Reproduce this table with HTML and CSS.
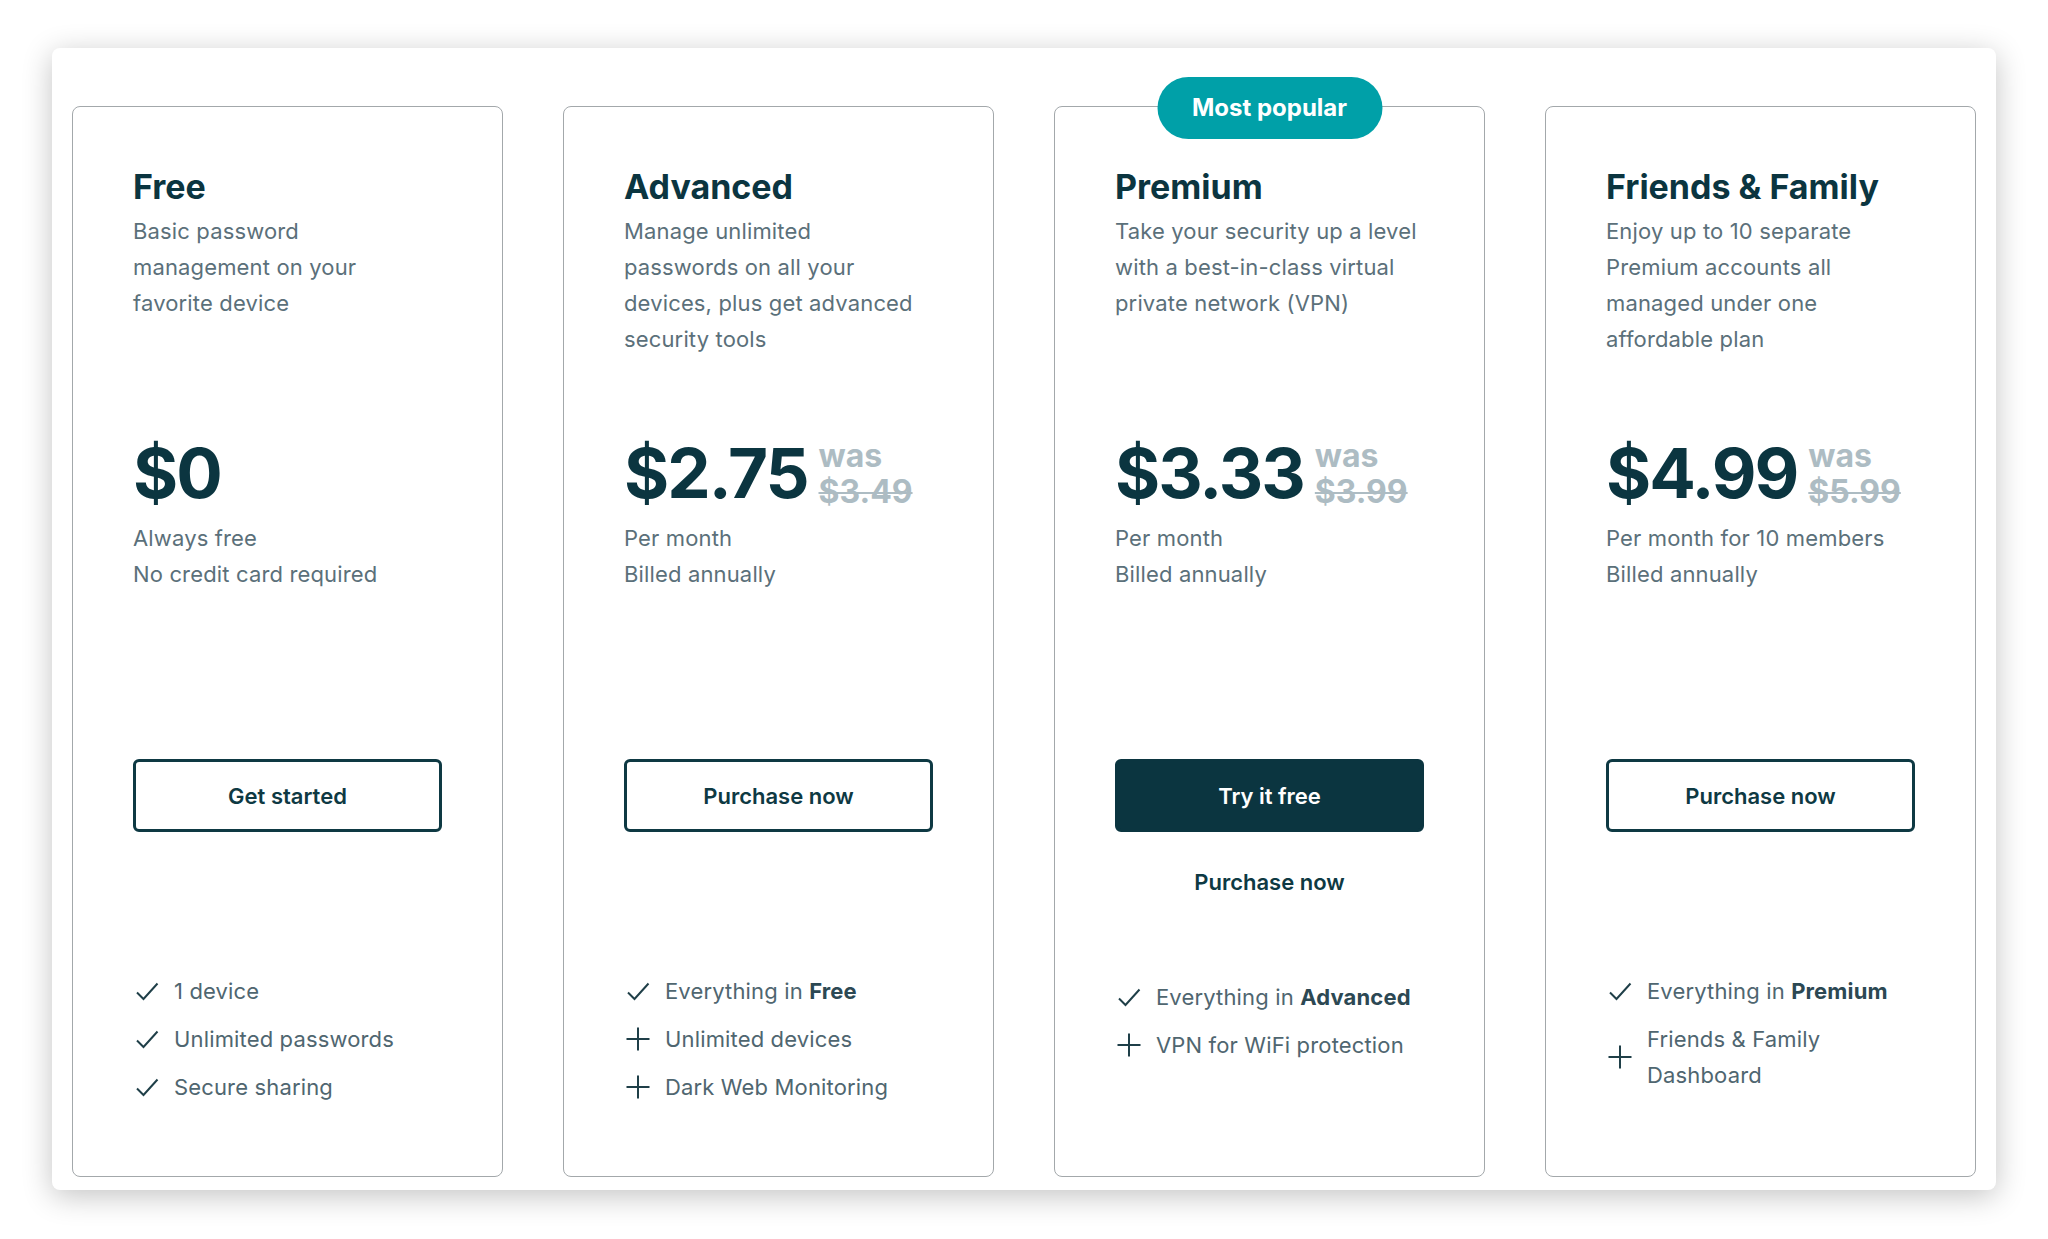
FILE: index.html
```html
<!DOCTYPE html>
<html lang="en">
<head>
<meta charset="utf-8">
<title>Plans</title>
<link rel="stylesheet" href="styles.css">
</head>
<body>
<div class="page">
  <section class="panel">
    <article class="card">
      <h2 class="title">Free</h2>
      <p class="desc">Basic password<br>management on your<br>favorite device</p>
      <div class="price-row"><span class="price">$0</span></div>
      <p class="sub">Always free<br>No credit card required</p>
      <div class="cta"><a class="btn">Get started</a></div>
      <ul class="features">
        <li><svg class="ic" viewBox="0 0 24 24"><path d="M2 13.5 8.5 20 22.5 4.5"/></svg><span>1 device</span></li>
        <li><svg class="ic" viewBox="0 0 24 24"><path d="M2 13.5 8.5 20 22.5 4.5"/></svg><span>Unlimited passwords</span></li>
        <li><svg class="ic" viewBox="0 0 24 24"><path d="M2 13.5 8.5 20 22.5 4.5"/></svg><span>Secure sharing</span></li>
      </ul>
    </article>

    <article class="card">
      <h2 class="title">Advanced</h2>
      <p class="desc">Manage unlimited<br>passwords on all your<br>devices, plus get advanced<br>security tools</p>
      <div class="price-row"><span class="price">$2.75</span><span class="was">was<br><s>$3.49</s></span></div>
      <p class="sub">Per month<br>Billed annually</p>
      <div class="cta"><a class="btn">Purchase now</a></div>
      <ul class="features">
        <li><svg class="ic" viewBox="0 0 24 24"><path d="M2 13.5 8.5 20 22.5 4.5"/></svg><span>Everything in <b>Free</b></span></li>
        <li><svg class="ic" viewBox="0 0 24 24"><path d="M12 0.5V23.5M0.5 12H23.5"/></svg><span>Unlimited devices</span></li>
        <li><svg class="ic" viewBox="0 0 24 24"><path d="M12 0.5V23.5M0.5 12H23.5"/></svg><span>Dark Web Monitoring</span></li>
      </ul>
    </article>

    <article class="card">
      <div class="badge">Most popular</div>
      <h2 class="title">Premium</h2>
      <p class="desc">Take your security up a level<br>with a best-in-class virtual<br>private network (VPN)</p>
      <div class="price-row"><span class="price">$3.33</span><span class="was">was<br><s>$3.99</s></span></div>
      <p class="sub">Per month<br>Billed annually</p>
      <div class="cta"><a class="btn btn-solid">Try it free</a><a class="link">Purchase now</a></div>
      <ul class="features">
        <li><svg class="ic" viewBox="0 0 24 24"><path d="M2 13.5 8.5 20 22.5 4.5"/></svg><span>Everything in <b>Advanced</b></span></li>
        <li><svg class="ic" viewBox="0 0 24 24"><path d="M12 0.5V23.5M0.5 12H23.5"/></svg><span>VPN for WiFi protection</span></li>
      </ul>
    </article>

    <article class="card">
      <h2 class="title">Friends &amp; Family</h2>
      <p class="desc">Enjoy up to 10 separate<br>Premium accounts all<br>managed under one<br>affordable plan</p>
      <div class="price-row"><span class="price">$4.99</span><span class="was">was<br><s>$5.99</s></span></div>
      <p class="sub">Per month for 10 members<br>Billed annually</p>
      <div class="cta"><a class="btn">Purchase now</a></div>
      <ul class="features">
        <li><svg class="ic" viewBox="0 0 24 24"><path d="M2 13.5 8.5 20 22.5 4.5"/></svg><span>Everything in <b>Premium</b></span></li>
        <li><svg class="ic" viewBox="0 0 24 24"><path d="M12 0.5V23.5M0.5 12H23.5"/></svg><span>Friends &amp; Family<br>Dashboard</span></li>
      </ul>
    </article>
  </section>
</div>
</body>
</html>
```

FILE: styles.css
```css
* { box-sizing: border-box; }

html, body {
  margin: 0;
  background: #ffffff;
}

body {
  font-family: Inter, "Liberation Sans", Arial, sans-serif;
  color: #0b3540;
}

.page {
  padding: 48px 52px 40px;
}

.panel {
  background: #ffffff;
  border-radius: 8px;
  box-shadow: 0 6px 30px rgba(0, 0, 0, 0.24);
  padding: 58px 20px 13px;
  display: grid;
  grid-template-columns: repeat(4, 431px);
  column-gap: 60px;
}

.card {
  position: relative;
  border: 1px solid #a3a8ab;
  border-radius: 8px;
  padding: 60px 60px 71px;
  display: flex;
  flex-direction: column;
}

.badge {
  position: absolute;
  top: -30px;
  left: 50%;
  transform: translateX(-50%);
  width: 225px;
  height: 62px;
  border-radius: 31px;
  background: #00a0a8;
  color: #ffffff;
  font-size: 24px;
  font-weight: 700;
  line-height: 62px;
  text-align: center;
}

.title {
  margin: 0 0 6px;
  font-size: 34px;
  font-weight: 700;
  line-height: 40px;
  color: #0b3540;
  white-space: nowrap;
}

.desc {
  margin: 0;
  min-height: 144px;
  font-size: 22px;
  line-height: 36px;
  letter-spacing: 0.15px;
  color: #5b707a;
  white-space: nowrap;
}

.price-row {
  margin-top: 76px;
  display: flex;
  align-items: flex-end;
  gap: 11px;
}

.price {
  font-size: 69px;
  font-weight: 700;
  line-height: 80px;
  letter-spacing: -2px;
  color: #0b3540;
}

.was {
  margin-bottom: 3px;
  font-size: 32px;
  font-weight: 700;
  line-height: 36px;
  color: #adbcc3;
}

.was s {
  text-decoration-thickness: 2px;
}

.sub {
  margin: 7px 0 0;
  font-size: 22px;
  line-height: 36px;
  letter-spacing: 0.15px;
  color: #5b707a;
  white-space: nowrap;
}

.cta {
  margin-top: 167px;
  min-height: 141px;
  display: flex;
  flex-direction: column;
}

.btn {
  height: 73px;
  border: 3px solid #0e3943;
  border-radius: 6px;
  display: flex;
  align-items: center;
  justify-content: center;
  font-size: 22px;
  font-weight: 600;
  color: #0e3943;
  background: #ffffff;
}

.btn-solid {
  background: #0b3540;
  border-color: #0b3540;
  color: #ffffff;
}

.link {
  margin-top: 26px;
  padding: 6px 0;
  line-height: 36px;
  text-align: center;
  font-size: 22px;
  font-weight: 600;
  color: #0e3943;
}

.features {
  margin: 73px 0 0;
  padding: 0;
  list-style: none;
  display: flex;
  flex-direction: column;
  gap: 12px;
}

.features li {
  display: flex;
  align-items: center;
  gap: 13px;
  font-size: 22px;
  line-height: 36px;
  letter-spacing: 0.15px;
  color: #4f6670;
  white-space: nowrap;
}

.features b {
  font-weight: 700;
  color: #2c4853;
}

.ic {
  flex: 0 0 28px;
  width: 28px;
  height: 24px;
  fill: none;
  stroke: #1f3f48;
  stroke-width: 2;
}
```
